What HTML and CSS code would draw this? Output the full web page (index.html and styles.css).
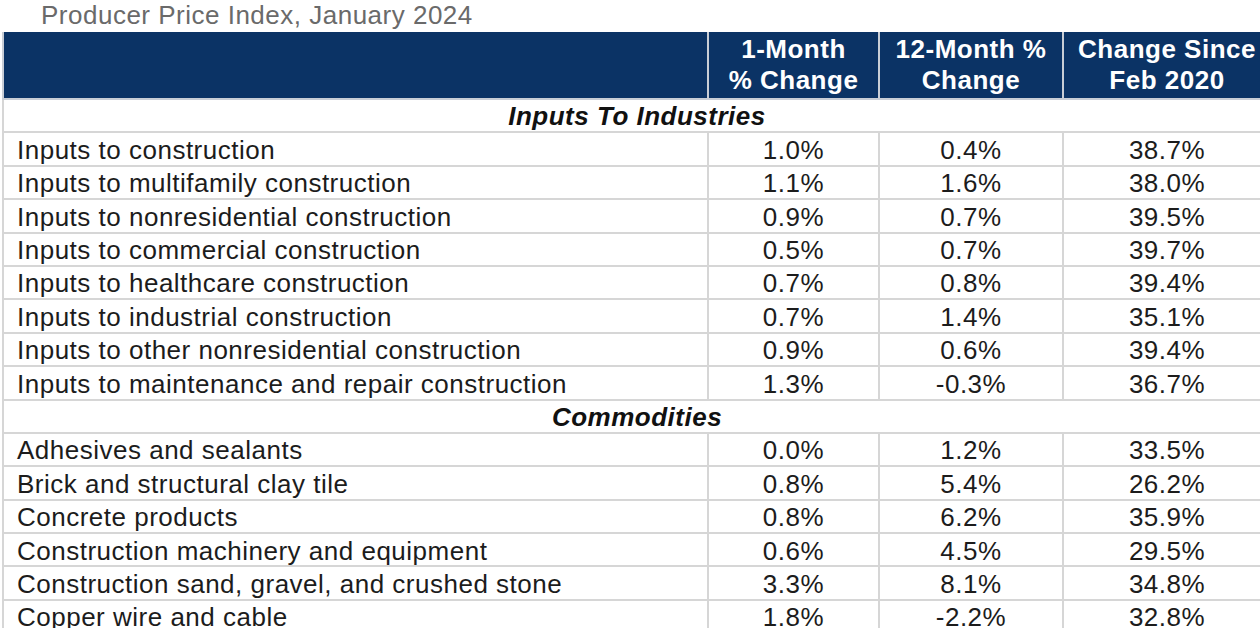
FILE: index.html
```html
<!DOCTYPE html>
<html lang="en">
<head>
<meta charset="utf-8">
<title>Producer Price Index, January 2024</title>
<link rel="stylesheet" href="styles.css">
</head>
<body>
<div class="page">
  <h1 class="title">Producer Price Index, January 2024</h1>
  <table class="ppi">
    <colgroup>
      <col class="c-name">
      <col class="c-m1">
      <col class="c-m12">
      <col class="c-feb">
    </colgroup>
    <thead>
      <tr>
        <th></th>
        <th>1-Month<br>% Change</th>
        <th>12-Month %<br>Change</th>
        <th>Change Since<br>Feb 2020</th>
      </tr>
    </thead>
    <tbody>
      <tr class="section"><td colspan="4">Inputs To Industries</td></tr>
      <tr><td>Inputs to construction</td><td>1.0%</td><td>0.4%</td><td>38.7%</td></tr>
      <tr><td>Inputs to multifamily construction</td><td>1.1%</td><td>1.6%</td><td>38.0%</td></tr>
      <tr><td>Inputs to nonresidential construction</td><td>0.9%</td><td>0.7%</td><td>39.5%</td></tr>
      <tr><td>Inputs to commercial construction</td><td>0.5%</td><td>0.7%</td><td>39.7%</td></tr>
      <tr><td>Inputs to healthcare construction</td><td>0.7%</td><td>0.8%</td><td>39.4%</td></tr>
      <tr><td>Inputs to industrial construction</td><td>0.7%</td><td>1.4%</td><td>35.1%</td></tr>
      <tr><td>Inputs to other nonresidential construction</td><td>0.9%</td><td>0.6%</td><td>39.4%</td></tr>
      <tr><td>Inputs to maintenance and repair construction</td><td>1.3%</td><td>-0.3%</td><td>36.7%</td></tr>
      <tr class="section"><td colspan="4">Commodities</td></tr>
      <tr><td>Adhesives and sealants</td><td>0.0%</td><td>1.2%</td><td>33.5%</td></tr>
      <tr><td>Brick and structural clay tile</td><td>0.8%</td><td>5.4%</td><td>26.2%</td></tr>
      <tr><td>Concrete products</td><td>0.8%</td><td>6.2%</td><td>35.9%</td></tr>
      <tr><td>Construction machinery and equipment</td><td>0.6%</td><td>4.5%</td><td>29.5%</td></tr>
      <tr><td>Construction sand, gravel, and crushed stone</td><td>3.3%</td><td>8.1%</td><td>34.8%</td></tr>
      <tr><td>Copper wire and cable</td><td>1.8%</td><td>-2.2%</td><td>32.8%</td></tr>
    </tbody>
  </table>
</div>
</body>
</html>
```
FILE: styles.css
```css
html, body {
  margin: 0;
  padding: 0;
  background: #ffffff;
  overflow: hidden;
}

.page {
  width: 1260px;
  height: 628px;
  overflow: hidden;
  font-family: "Liberation Sans", Arial, sans-serif;
  letter-spacing: 0.5px;
}

.title {
  margin: 0;
  padding: 1px 0 0 41px;
  height: 31px;
  box-sizing: border-box;
  font-size: 26px;
  font-weight: normal;
  line-height: 28px;
  color: #6a6a6a;
  white-space: nowrap;
}

.ppi {
  margin: 1px 0 0 2px;
  border-collapse: collapse;
  table-layout: fixed;
  width: 1268px;
}

.c-name { width: 705px; }
.c-m1 { width: 171px; }
.c-m12 { width: 184px; }
.c-feb { width: 208px; }

.ppi th {
  background: #0b3365;
  color: #ffffff;
  font-weight: bold;
  font-size: 26px;
  line-height: 31px;
  height: 66px;
  padding: 0;
  text-align: center;
  vertical-align: middle;
  border: 2px solid #c9ced6;
  border-top: 0;
}

.ppi td {
  height: 29.9px;
  padding: 1.5px 0 0;
  font-size: 26px;
  line-height: 28px;
  color: #1c1c1c;
  text-align: center;
  vertical-align: middle;
  border: 2px solid #d6d6d6;
  white-space: nowrap;
}

.ppi td:first-child {
  text-align: left;
  padding-left: 13px;
}

.ppi .section td {
  text-align: center;
  padding-left: 0;
  font-weight: bold;
  font-style: italic;
  color: #111111;
}
```
